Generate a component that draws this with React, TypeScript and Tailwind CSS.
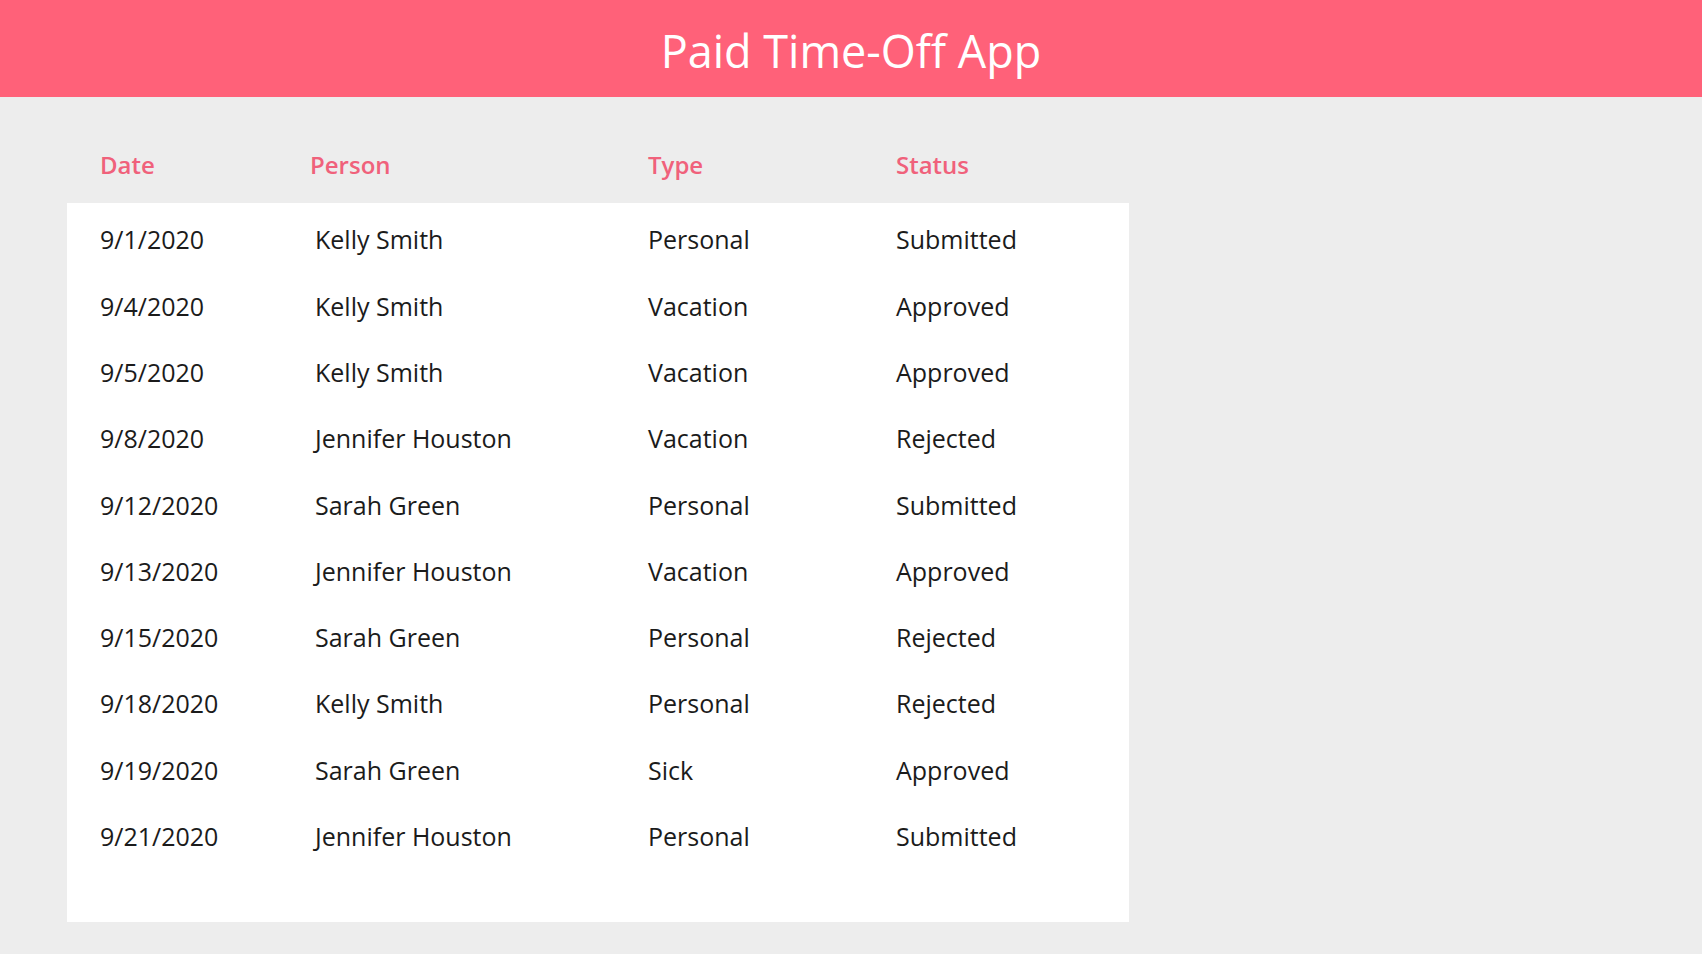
const rows = [
  ["9/1/2020", "Kelly Smith", "Personal", "Submitted"],
  ["9/4/2020", "Kelly Smith", "Vacation", "Approved"],
  ["9/5/2020", "Kelly Smith", "Vacation", "Approved"],
  ["9/8/2020", "Jennifer Houston", "Vacation", "Rejected"],
  ["9/12/2020", "Sarah Green", "Personal", "Submitted"],
  ["9/13/2020", "Jennifer Houston", "Vacation", "Approved"],
  ["9/15/2020", "Sarah Green", "Personal", "Rejected"],
  ["9/18/2020", "Kelly Smith", "Personal", "Rejected"],
  ["9/19/2020", "Sarah Green", "Sick", "Approved"],
  ["9/21/2020", "Jennifer Houston", "Personal", "Submitted"],
]

export default function App() {
  return (
    <div className="min-h-[954px] bg-[#ededed] font-['Open_Sans',sans-serif]">
      <header className="h-[97px] bg-[#ff6179] flex items-center justify-center pt-[4px]">
        <h1 className="text-white text-[45px] leading-none">Paid Time-Off App</h1>
      </header>

      <main className="pl-[67px] pt-[48px]">
        <div className="w-[1062px]">
          <div className="grid grid-cols-[210px_338px_248px_1fr] px-[33px] h-[40px] items-center text-[24px] font-semibold text-[#f0617b]">
            <span>Date</span>
            <span>Person</span>
            <span>Type</span>
            <span>Status</span>
          </div>

          <div className="mt-[18px] bg-white pt-[4px] pb-[52px] px-[33px] text-[25px] text-[#1b1b1b]">
            {rows.map((r, i) => (
              <div key={i} className="grid grid-cols-[210px_338px_248px_1fr] h-[66.3px] items-center">
                <span>{r[0]}</span>
                <span className="pl-[5px]">{r[1]}</span>
                <span>{r[2]}</span>
                <span>{r[3]}</span>
              </div>
            ))}
          </div>
        </div>
      </main>
    </div>
  )
}
